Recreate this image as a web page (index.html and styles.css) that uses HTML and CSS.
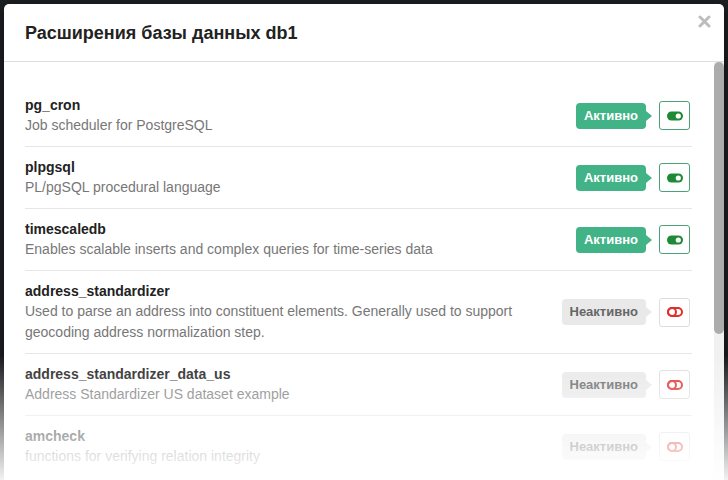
FILE: index.html
```html
<!DOCTYPE html>
<html lang="ru">
<head>
    <meta charset="UTF-8">
    <title>Расширения базы данных db1</title>
    <link rel="stylesheet" href="styles.css">
</head>
<body>

    <!-- Modal -->
    <div class="modal">
        <div class="modal-header">
            <h1>Расширения базы данных db1</h1>
            <button class="close-btn" title="Закрыть">
                <svg width="13" height="13" viewBox="0 0 13 13"><path d="M2 2 L11 11 M11 2 L2 11" stroke="#bdbdbd" stroke-width="3" stroke-linecap="round"/></svg>
            </button>
        </div>

        <div class="modal-body">
            <ul class="ext-list">
                <li class="ext">
                    <div class="ext-info">
                        <div class="ext-name">pg_cron</div>
                        <div class="ext-desc">Job scheduler for PostgreSQL</div>
                    </div>
                    <span class="badge on">Активно</span>
                    <button class="toggle on"><svg width="16" height="10" viewBox="0 0 16 10"><rect x="0" y="0.5" width="16" height="9" rx="4.5" fill="#1f8a36"/><circle cx="11.3" cy="5" r="2.6" fill="#fff"/></svg></button>
                </li>
                <li class="ext">
                    <div class="ext-info">
                        <div class="ext-name">plpgsql</div>
                        <div class="ext-desc">PL/pgSQL procedural language</div>
                    </div>
                    <span class="badge on">Активно</span>
                    <button class="toggle on"><svg width="16" height="10" viewBox="0 0 16 10"><rect x="0" y="0.5" width="16" height="9" rx="4.5" fill="#1f8a36"/><circle cx="11.3" cy="5" r="2.6" fill="#fff"/></svg></button>
                </li>
                <li class="ext">
                    <div class="ext-info">
                        <div class="ext-name">timescaledb</div>
                        <div class="ext-desc">Enables scalable inserts and complex queries for time-series data</div>
                    </div>
                    <span class="badge on">Активно</span>
                    <button class="toggle on"><svg width="16" height="10" viewBox="0 0 16 10"><rect x="0" y="0.5" width="16" height="9" rx="4.5" fill="#1f8a36"/><circle cx="11.3" cy="5" r="2.6" fill="#fff"/></svg></button>
                </li>
                <li class="ext">
                    <div class="ext-info">
                        <div class="ext-name">address_standardizer</div>
                        <div class="ext-desc">Used to parse an address into constituent elements. Generally used to support geocoding address normalization step.</div>
                    </div>
                    <span class="badge off">Неактивно</span>
                    <button class="toggle off"><svg width="16" height="10" viewBox="0 0 16 10"><rect x="1" y="1" width="14" height="8" rx="4" fill="none" stroke="#e0302c" stroke-width="2"/><circle cx="5" cy="5" r="4" fill="none" stroke="#e0302c" stroke-width="2"/></svg></button>
                </li>
                <li class="ext">
                    <div class="ext-info">
                        <div class="ext-name">address_standardizer_data_us</div>
                        <div class="ext-desc">Address Standardizer US dataset example</div>
                    </div>
                    <span class="badge off">Неактивно</span>
                    <button class="toggle off"><svg width="16" height="10" viewBox="0 0 16 10"><rect x="1" y="1" width="14" height="8" rx="4" fill="none" stroke="#e0302c" stroke-width="2"/><circle cx="5" cy="5" r="4" fill="none" stroke="#e0302c" stroke-width="2"/></svg></button>
                </li>
                <li class="ext">
                    <div class="ext-info">
                        <div class="ext-name">amcheck</div>
                        <div class="ext-desc">functions for verifying relation integrity</div>
                    </div>
                    <span class="badge off">Неактивно</span>
                    <button class="toggle off"><svg width="16" height="10" viewBox="0 0 16 10"><rect x="1" y="1" width="14" height="8" rx="4" fill="none" stroke="#e0302c" stroke-width="2"/><circle cx="5" cy="5" r="4" fill="none" stroke="#e0302c" stroke-width="2"/></svg></button>
                </li>
            </ul>

            <!-- Scrollbar -->
            <div class="scroll-track">
                <div class="scroll-thumb"></div>
            </div>
        </div>
    </div>

    <!-- Bottom fade -->
    <div class="fade"></div>

</body>
</html>
```

FILE: styles.css
```css
/* Basic Styles */
html, body {
    height: 100%;
}

body {
    font-family: "Liberation Sans", Arial, sans-serif;
    margin: 0;
    padding: 4px 4px 0 4px;
    box-sizing: border-box;
    background-color: #1c1f22;
    overflow: hidden;
}

/* Modal */
.modal {
    background-color: #fff;
    border-radius: 5px 5px 0 0;
    height: 100%;
    display: flex;
    flex-direction: column;
    box-shadow: 0 3px 12px rgba(0, 0, 0, 0.5);
    overflow: hidden;
}

.modal-header {
    display: flex;
    justify-content: space-between;
    align-items: flex-start;
    padding: 18px 13px 0 21px;
    height: 58px;
    box-sizing: border-box;
    border-bottom: 1px solid #dedede;
    flex-shrink: 0;
}

.modal-header h1 {
    margin: 0;
    font-size: 18px;
    line-height: 22px;
    color: #222;
}

.close-btn {
    background: none;
    border: none;
    padding: 0;
    margin-top: -7px;
    cursor: pointer;
    line-height: 0;
}

.modal-body {
    flex: 1;
    display: flex;
    min-height: 0;
    overflow: hidden;
}

/* Scrollbar */
.scroll-track {
    width: 10px;
    flex-shrink: 0;
    background-color: #f1f1f1;
}

.scroll-thumb {
    height: 272px;
    background-color: #acacac;
    border-radius: 5px;
}

/* Extension list */
.ext-list {
    flex: 1;
    list-style: none;
    margin: 0;
    padding: 23px 22px 0 21px;
}

.ext {
    display: flex;
    align-items: center;
    padding: 10px 2px 10px 0;
    border-bottom: 1px solid #e6e6e6;
}

.ext-info {
    flex: 1;
    padding-right: 40px;
}

.ext-name {
    font-size: 14px;
    font-weight: bold;
    line-height: 20px;
    color: #222;
}

.ext-desc {
    font-size: 14px;
    line-height: 21px;
    color: #777;
}

/* Status badges */
.badge {
    position: relative;
    font-size: 13px;
    font-weight: bold;
    line-height: 26px;
    padding: 0 8px;
    border-radius: 4px;
    margin-right: 13px;
    white-space: nowrap;
}

.badge::after {
    content: "";
    position: absolute;
    right: -6px;
    top: 8px;
    border-top: 5px solid transparent;
    border-bottom: 5px solid transparent;
    border-left: 6px solid;
}

.badge.on {
    background-color: #41b387;
    color: #fff;
}

.badge.on::after {
    border-left-color: #41b387;
}

.badge.off {
    background-color: #e9e9e9;
    color: #666;
}

.badge.off::after {
    border-left-color: #e9e9e9;
}

/* Toggle buttons */
.toggle {
    width: 31px;
    height: 29px;
    background-color: #fff;
    border: 1px solid #ddd;
    border-radius: 3px;
    padding: 0;
    display: flex;
    align-items: center;
    justify-content: center;
    cursor: pointer;
}

.toggle.on {
    border-color: #4ba27a;
}

/* Bottom fade */
.fade {
    position: fixed;
    left: 0;
    right: 0;
    bottom: 0;
    height: 125px;
    background: linear-gradient(rgba(255, 255, 255, 0), rgba(255, 255, 255, 0.95));
    pointer-events: none;
}
```
